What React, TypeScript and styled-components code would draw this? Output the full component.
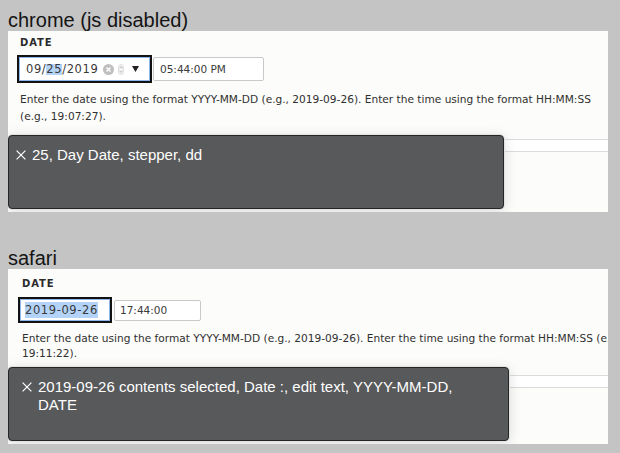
import React from 'react';
import styled, { createGlobalStyle } from 'styled-components';

const GlobalStyle = createGlobalStyle`
    html,
    body {
        margin: 0;
        padding: 0;
        background: #c4c4c4;
    }
    body {
        width: 620px;
        height: 453px;
        overflow: hidden;
    }
`;

const Page = styled.div`
    display: flex;
    flex-direction: column;
    padding-left: 8px;
`;

const BrowserTitle = styled.h2<{ $top: number }>`
    margin: 0;
    padding-top: ${(p) => p.$top}px;
    height: 21px;
    font: 400 20px/20px 'Liberation Sans', Arial, sans-serif;
    color: #141414;
`;

const Panel = styled.div<{ $height: number }>`
    position: relative;
    width: 600px;
    height: ${(p) => p.$height}px;
    background: #fcfcfa;
    overflow: hidden;
    font-family: 'DejaVu Sans', 'Lucida Grande', sans-serif;
    color: #333;
`;

const FieldBody = styled.div<{ $padTop: number; $padLeft: number }>`
    padding: ${(p) => p.$padTop}px 0 0 ${(p) => p.$padLeft}px;
    display: flex;
    flex-direction: column;
    align-items: flex-start;
`;

const FieldLabel = styled.div`
    font-size: 10px;
    line-height: 14px;
    font-weight: 700;
    letter-spacing: 0.9px;
    text-transform: uppercase;
    color: #2b2b2b;
`;

const FieldRow = styled.div<{ $top: number; $gap: number; $shift: number }>`
    display: flex;
    align-items: center;
    gap: ${(p) => p.$gap}px;
    margin-top: ${(p) => p.$top}px;
    margin-left: -${(p) => p.$shift}px;
`;

const FocusRing = styled.div`
    display: flex;
    border: 2px solid #121212;
`;

const DateBox = styled.div<{ $w: number; $h: number; $padLeft: number }>`
    display: flex;
    align-items: center;
    box-sizing: border-box;
    width: ${(p) => p.$w}px;
    height: ${(p) => p.$h}px;
    padding: 0 10px 0 ${(p) => p.$padLeft}px;
    border: 1px solid #8cb6ec;
    background: #fff;
    font-size: 11.5px;
    letter-spacing: 0.6px;
    color: #3a3a3a;
`;

const Selected = styled.span<{ $h: number }>`
    display: inline-block;
    line-height: ${(p) => p.$h}px;
    background: #b4d3f8;
`;

const Controls = styled.div`
    display: flex;
    align-items: center;
    margin-left: auto;
`;

const TimeBox = styled.div<{ $w: number; $h: number; $padLeft: number }>`
    display: flex;
    align-items: center;
    box-sizing: border-box;
    width: ${(p) => p.$w}px;
    height: ${(p) => p.$h}px;
    padding-left: ${(p) => p.$padLeft}px;
    border: 1px solid #c9c9c9;
    border-radius: 2px;
    background: #fff;
    font-size: 10.5px;
    color: #3a3a3a;
`;

const Description = styled.div<{ $top: number; $lh: number }>`
    margin-top: ${(p) => p.$top}px;
    font-size: 10.6px;
    line-height: ${(p) => p.$lh}px;
    white-space: nowrap;
    color: #303030;
`;

const Divider = styled.div<{ $top: number }>`
    margin-top: ${(p) => p.$top}px;
    height: 11px;
    border-top: 1px solid #dcdcdc;
    border-bottom: 1px solid #dcdcdc;
    background: #fff;
`;

const Caption = styled.div<{ $top: number; $w: number; $padLeft: number }>`
    position: absolute;
    left: 0;
    top: ${(p) => p.$top}px;
    width: ${(p) => p.$w}px;
    height: 74px;
    box-sizing: border-box;
    display: flex;
    align-items: flex-start;
    gap: 6px;
    padding: 10px 0 0 ${(p) => p.$padLeft}px;
    background: #58595b;
    border: 1px solid #262626;
    border-radius: 4px;
    box-shadow: 0 0 0 1px #e2e2e2, 0 2px 14px rgba(0, 0, 0, 0.14);
    color: #fff;
    font: 400 15px/18px 'Liberation Sans', Arial, sans-serif;
`;

const CloseMark = styled.span`
    display: flex;
    align-items: center;
    height: 18px;
`;

const ClearIcon = () => (
    <svg width="11" height="11" viewBox="0 0 11 11" style={{ marginRight: 4 }}>
        <circle cx="5.5" cy="5.5" r="5.5" fill="#bfbfbf" />
        <path d="M3.5 3.5l4 4M7.5 3.5l-4 4" stroke="#fff" strokeWidth="1.4" />
    </svg>
);

const SpinIcon = () => (
    <svg width="6" height="11" viewBox="0 0 6 11" style={{ marginRight: 8 }}>
        <rect x="0.5" y="0.5" width="5" height="10" rx="2.5" fill="#f4f4f4" stroke="#e0e0e0" />
        <path d="M1.6 4.2L3 2.6l1.4 1.6M1.6 6.8L3 8.4l1.4-1.6" stroke="#a8a8a8" strokeWidth="0.8" fill="none" />
    </svg>
);

const ArrowIcon = () => (
    <svg width="7" height="6" viewBox="0 0 7 6">
        <path d="M0 0h7L3.5 6z" fill="#222" />
    </svg>
);

const CloseIcon = () => (
    <svg width="10" height="10" viewBox="0 0 10 10">
        <path d="M0.6 0.6l8.8 8.8M9.4 0.6L0.6 9.4" stroke="#fff" strokeWidth="1.2" />
    </svg>
);

const ChromeSection = () => (
    <>
        <BrowserTitle $top={10}>chrome (js disabled)</BrowserTitle>
        <Panel $height={181}>
            <FieldBody $padTop={5} $padLeft={12}>
                <FieldLabel>Date</FieldLabel>
                <FieldRow $top={5} $gap={1} $shift={3}>
                    <FocusRing>
                        <DateBox $w={131} $h={24} $padLeft={6}>
                            <span>
                                09/<Selected $h={11}>25</Selected>/2019
                            </span>
                            <Controls>
                                <ClearIcon />
                                <SpinIcon />
                                <ArrowIcon />
                            </Controls>
                        </DateBox>
                    </FocusRing>
                    <TimeBox $w={111} $h={24} $padLeft={6}>
                        05:44:00 PM
                    </TimeBox>
                </FieldRow>
                <Description $top={8} $lh={17}>
                    Enter the date using the format YYYY-MM-DD (e.g., 2019-09-26). Enter the time using
                    the format HH:MM:SS
                    <br />
                    (e.g., 19:07:27).
                </Description>
            </FieldBody>
            <Divider $top={14} />
            <Caption $top={104} $w={496} $padLeft={7}>
                <CloseMark>
                    <CloseIcon />
                </CloseMark>
                <div>25, Day Date, stepper, dd</div>
            </Caption>
        </Panel>
    </>
);

const SafariSection = () => (
    <>
        <BrowserTitle $top={36}>safari</BrowserTitle>
        <Panel $height={175}>
            <FieldBody $padTop={8} $padLeft={14}>
                <FieldLabel>Date</FieldLabel>
                <FieldRow $top={6} $gap={2} $shift={4}>
                    <FocusRing>
                        <DateBox $w={90} $h={22} $padLeft={4}>
                            <Selected $h={16}>2019-09-26</Selected>
                        </DateBox>
                    </FocusRing>
                    <TimeBox $w={87} $h={21} $padLeft={5}>
                        17:44:00
                    </TimeBox>
                </FieldRow>
                <Description $top={8} $lh={15}>
                    Enter the date using the format YYYY-MM-DD (e.g., 2019-09-26). Enter the time using
                    the format HH:MM:SS (e.g.,
                    <br />
                    19:11:22).
                </Description>
            </FieldBody>
            <Divider $top={14} />
            <Caption $top={98} $w={501} $padLeft={13}>
                <CloseMark>
                    <CloseIcon />
                </CloseMark>
                <div>
                    2019-09-26 contents selected, Date :, edit text, YYYY-MM-DD,
                    <br />
                    DATE
                </div>
            </Caption>
        </Panel>
    </>
);

export default function App() {
    return (
        <>
            <GlobalStyle />
            <Page>
                <ChromeSection />
                <SafariSection />
            </Page>
        </>
    );
}
